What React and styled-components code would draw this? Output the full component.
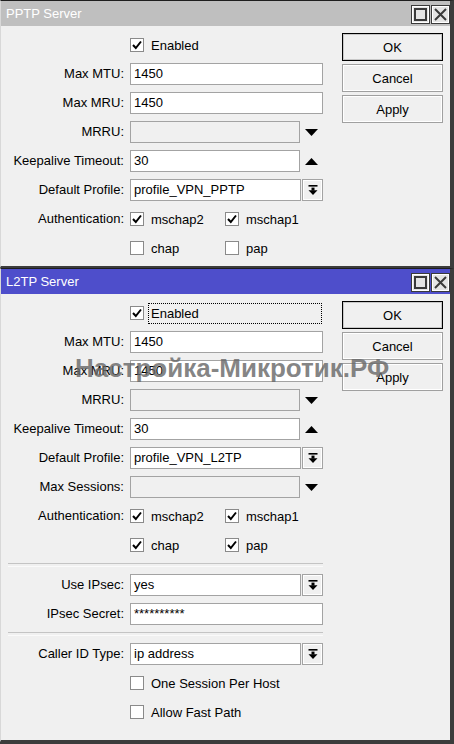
import React from 'react';
import styled, { createGlobalStyle } from 'styled-components';

const Global = createGlobalStyle`
  html, body { margin: 0; padding: 0; background: #3c3c3c; }
  body {
    font-family: "Liberation Sans", Arial, sans-serif;
    font-size: 13px;
    color: #000;
  }
  * { box-sizing: border-box; }
`;

const Page = styled.div`
  position: relative;
  width: 454px;
  height: 744px;
  overflow: hidden;
  background: #3c3c3c;
`;

const Window = styled.section`
  background: #f0f0f0;
  border-top: 1px solid #1e1e1e;
  border-left: 1px solid #d8d8d8;
  border-right: 4px solid #3c3c3c;
  border-bottom: 2px solid #3c3c3c;
`;

const TitleBar = styled.header`
  height: 25px;
  background: ${p => p.$active ? '#4e4ecb' : '#bfbfbf'};
  color: #fff;
  display: flex;
  align-items: center;
  justify-content: space-between;
  padding-left: 5px;
  font-size: 13px;
`;

const TitleText = styled.span`
  line-height: 25px;
`;

const TitleButtons = styled.div`
  display: flex;
  gap: 1px;
  align-self: flex-start;
  margin-top: 4px;
`;

const TitleButton = styled.div`
  width: 19px;
  height: 19px;
  border: 1px solid #3a3a3a;
  background: #e4e4e4;
  box-shadow: inset 0 0 0 1px #ffffff;
  display: flex;
  align-items: center;
  justify-content: center;
`;

const Body = styled.div`
  display: flex;
  align-items: flex-start;
  padding: 8px 7px ${p => p.$bottom}px 0;
`;

const Form = styled.div`
  display: grid;
  grid-template-columns: 123px 193px;
  column-gap: 6px;
  row-gap: 7px;
`;

const Label = styled.div`
  height: 22px;
  line-height: 22px;
  text-align: right;
  white-space: nowrap;
`;

const Field = styled.div`
  height: 22px;
  display: flex;
  align-items: center;
`;

const TextBox = styled.div`
  width: ${p => p.$w}px;
  height: 22px;
  line-height: 20px;
  padding: 0 3px;
  border: 1px solid #a3a3a3;
  background: ${p => p.$disabled ? '#f0f0f0' : '#ffffff'};
  white-space: nowrap;
  overflow: hidden;
`;

const DropButton = styled.div`
  width: 21px;
  height: 22px;
  margin-left: 1px;
  border: 1px solid #a3a3a3;
  background: #f0f0f0;
  box-shadow: inset 0 0 0 1px #ffffff;
  display: flex;
  align-items: center;
  justify-content: center;
`;

const ArrowSlot = styled.div`
  width: 23px;
  height: 22px;
  display: flex;
  align-items: center;
  justify-content: center;
`;

const CheckItem = styled.div`
  display: flex;
  align-items: center;
  width: ${p => p.$grow ? 'auto' : '95px'};
  flex: ${p => p.$grow ? '1' : 'none'};
  height: 22px;
  gap: 4px;
`;

const Box = styled.div`
  width: 14px;
  height: 14px;
  border: 1px solid #8a8a8a;
  background: #fff;
  flex: none;
  display: flex;
  align-items: center;
  justify-content: center;
`;

const CheckText = styled.span`
  flex: ${p => p.$grow ? '1' : 'none'};
  height: 21px;
  line-height: 19px;
  padding-left: 2px;
  white-space: nowrap;
  border: 1px dotted ${p => p.$focus ? '#000' : 'transparent'};
  margin-right: ${p => p.$grow ? '1px' : '0'};
`;

const Separator = styled.div`
  grid-column: 1 / -1;
  height: 4px;
  margin-left: 7px;
  display: flex;
  align-items: center;
  &::before {
    content: "";
    display: block;
    width: 100%;
    height: 2px;
    border-top: 1px solid #c4c4c4;
    border-bottom: 1px solid #fafafa;
  }
`;

const Buttons = styled.div`
  margin-left: 19px;
  margin-top: -1px;
  width: 101px;
  display: flex;
  flex-direction: column;
  gap: 3px;
`;

const Btn = styled.button`
  height: 28px;
  width: 101px;
  font-family: "Liberation Sans", Arial, sans-serif;
  font-size: 13px;
  color: #000;
  background: #f0f0f0;
  border: 1px solid ${p => p.$default ? '#000' : '#a0a0a0'};
  box-shadow: inset 0 0 0 1px ${p => p.$default ? '#c8c8c8' : '#ffffff'};
  padding: 0;
`;

const Watermark = styled.div`
  position: absolute;
  left: 75px;
  top: 355px;
  font-family: "Liberation Sans", Arial, sans-serif;
  font-weight: bold;
  font-size: 26px;
  line-height: 26px;
  color: rgba(105, 105, 105, 0.82);
  white-space: nowrap;
  pointer-events: none;
`;

const CheckMark = () => (
  <svg width="10" height="10" viewBox="0 0 10 10">
    <path d="M1 5 L3.8 8 L9 1.5" fill="none" stroke="#000" strokeWidth="2" />
  </svg>
);

const Check = ({ checked, label, grow, focus }) => (
  <CheckItem $grow={grow}>
    <Box>{checked && <CheckMark />}</Box>
    <CheckText $grow={grow} $focus={focus}>{label}</CheckText>
  </CheckItem>
);

const DropIcon = () => (
  <svg width="10" height="11" viewBox="0 0 10 11">
    <rect x="0.5" y="0" width="9" height="1.6" fill="#000" />
    <rect x="3.5" y="2.6" width="3" height="3" fill="#000" />
    <path d="M0.5 5.2 L9.5 5.2 L5 10 Z" fill="#000" />
  </svg>
);

const Tri = ({ up }) => (
  <svg width="13" height="7" viewBox="0 0 13 7">
    {up ? <path d="M0 7 L13 7 L6.5 0 Z" fill="#000" /> : <path d="M0 0 L13 0 L6.5 7 Z" fill="#000" />}
  </svg>
);

const SquareIcon = () => (
  <svg width="13" height="13" viewBox="0 0 13 13">
    <rect x="1" y="1" width="11" height="11" fill="none" stroke="#3a3a3a" strokeWidth="2" />
  </svg>
);

const CloseIcon = () => (
  <svg width="13" height="13" viewBox="0 0 13 13">
    <path d="M1 1 L12 12 M12 1 L1 12" stroke="#3a3a3a" strokeWidth="2" />
  </svg>
);

const Title = ({ text, active }) => (
  <TitleBar $active={active}>
    <TitleText>{text}</TitleText>
    <TitleButtons>
      <TitleButton><SquareIcon /></TitleButton>
      <TitleButton><CloseIcon /></TitleButton>
    </TitleButtons>
  </TitleBar>
);

const Row = ({ label, children }) => (
  <>
    <Label>{label}</Label>
    <Field>{children}</Field>
  </>
);

const FullInput = ({ value }) => <TextBox $w={193}>{value}</TextBox>;

const ArrowInput = ({ value, up, disabled }) => (
  <>
    <TextBox $w={170} $disabled={disabled}>{value}</TextBox>
    <ArrowSlot><Tri up={up} /></ArrowSlot>
  </>
);

const Select = ({ value }) => (
  <>
    <TextBox $w={171}>{value}</TextBox>
    <DropButton><DropIcon /></DropButton>
  </>
);

const SideButtons = () => (
  <Buttons>
    <Btn $default>OK</Btn>
    <Btn>Cancel</Btn>
    <Btn>Apply</Btn>
  </Buttons>
);

export default function App() {
  return (
    <Page>
      <Global />
      <Window>
        <Title text="PPTP Server" />
        <Body $bottom={7}>
          <Form>
            <Row label=""><Check checked grow label="Enabled" /></Row>
            <Row label="Max MTU:"><FullInput value="1450" /></Row>
            <Row label="Max MRU:"><FullInput value="1450" /></Row>
            <Row label="MRRU:"><ArrowInput disabled value="" /></Row>
            <Row label="Keepalive Timeout:"><ArrowInput up value="30" /></Row>
            <Row label="Default Profile:"><Select value="profile_VPN_PPTP" /></Row>
            <Row label="Authentication:">
              <Check checked label="mschap2" />
              <Check checked label="mschap1" />
            </Row>
            <Row label="">
              <Check label="chap" />
              <Check label="pap" />
            </Row>
          </Form>
          <SideButtons />
        </Body>
      </Window>
      <Window>
        <Title text="L2TP Server" active />
        <Body $bottom={17}>
          <Form>
            <Row label=""><Check checked grow focus label="Enabled" /></Row>
            <Row label="Max MTU:"><FullInput value="1450" /></Row>
            <Row label="Max MRU:"><FullInput value="1450" /></Row>
            <Row label="MRRU:"><ArrowInput disabled value="" /></Row>
            <Row label="Keepalive Timeout:"><ArrowInput up value="30" /></Row>
            <Row label="Default Profile:"><Select value="profile_VPN_L2TP" /></Row>
            <Row label="Max Sessions:"><ArrowInput disabled value="" /></Row>
            <Row label="Authentication:">
              <Check checked label="mschap2" />
              <Check checked label="mschap1" />
            </Row>
            <Row label="">
              <Check checked label="chap" />
              <Check checked label="pap" />
            </Row>
            <Separator />
            <Row label="Use IPsec:"><Select value="yes" /></Row>
            <Row label="IPsec Secret:"><FullInput value="**********" /></Row>
            <Separator />
            <Row label="Caller ID Type:"><Select value="ip address" /></Row>
            <Row label=""><Check grow label="One Session Per Host" /></Row>
            <Row label=""><Check grow label="Allow Fast Path" /></Row>
          </Form>
          <SideButtons />
        </Body>
      </Window>
      <Watermark>Настройка-Микротик.РФ</Watermark>
    </Page>
  );
}
